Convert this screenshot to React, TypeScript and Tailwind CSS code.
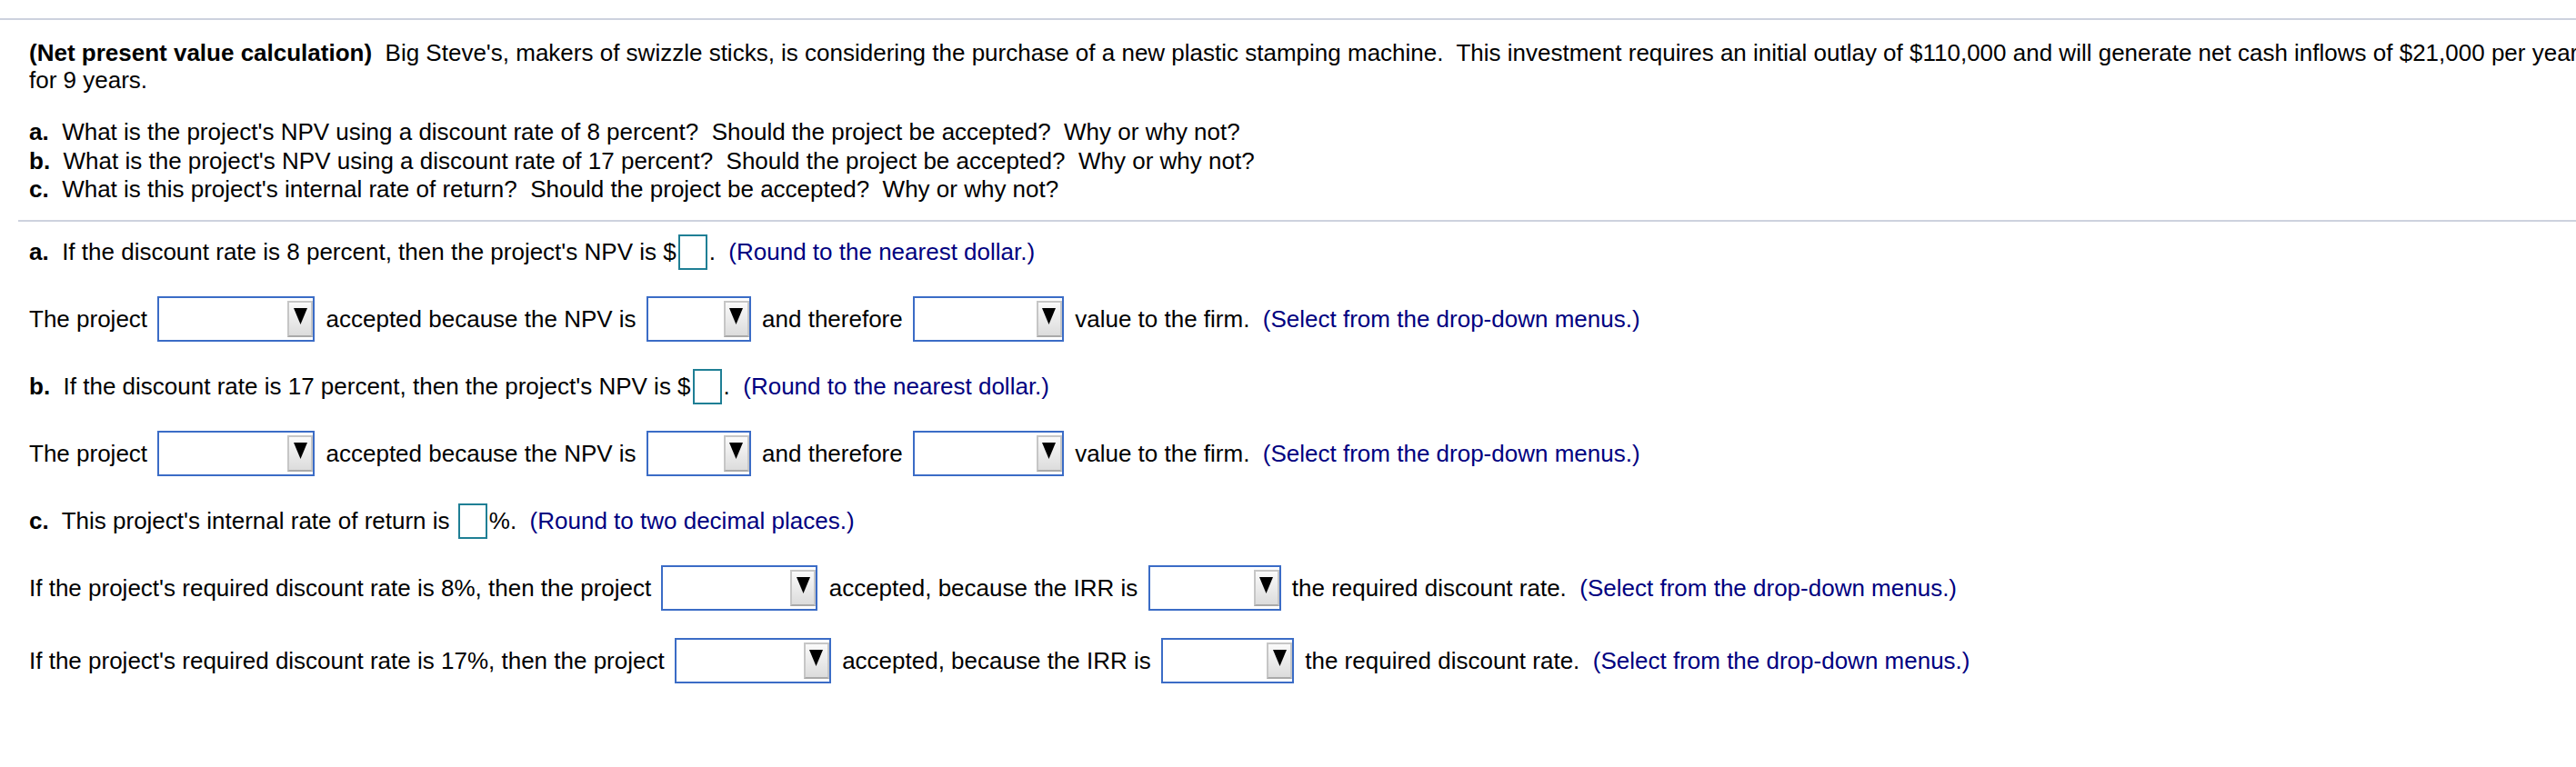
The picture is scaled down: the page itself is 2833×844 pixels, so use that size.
import React from 'react'

const navy = 'text-[#000080]'

function Dropdown({ w }: { w: string }) {
  return (
    <span className={`ml-[4px] mr-[5px] flex h-[50px] shrink-0 items-center justify-end border-2 border-[#3b6cc6] bg-white ${w}`}>
      <span className="flex h-[40px] w-[28px] justify-center border-2 border-[#c6c6c6] border-b-[#a9a9a9] bg-gradient-to-b from-[#fafafa] to-[#dcdcdc] pt-[6px]">
        <svg width="15" height="18" viewBox="0 0 15 18">
          <polygon points="0,0 15,0 7.5,18" fill="#000" />
        </svg>
      </span>
    </span>
  )
}

function Blank() {
  return <span className="mx-[2px] h-[39px] w-[32px] shrink-0 border-2 border-[#1f7f95] bg-white" />
}

function T({ children, className = '' }: { children: React.ReactNode; className?: string }) {
  return <span className={`whitespace-pre ${className}`}>{children}</span>
}

function ProjectRow() {
  return (
    <div className="flex h-[50px] items-center">
      <T>The project </T>
      <Dropdown w="w-[173px]" />
      <T> accepted because the NPV is </T>
      <Dropdown w="w-[115px]" />
      <T> and therefore </T>
      <Dropdown w="w-[166px]" />
      <T> value to the firm.  </T>
      <T className={navy}>(Select from the drop-down menus.)</T>
    </div>
  )
}

function IrrRow({ rate, w2 }: { rate: string; w2: string }) {
  return (
    <div className="flex h-[50px] items-center">
      <T>If the project's required discount rate is {rate}, then the project </T>
      <Dropdown w="w-[172px]" />
      <T> accepted, because the IRR is </T>
      <Dropdown w={w2} />
      <T> the required discount rate.  </T>
      <T className={navy}>(Select from the drop-down menus.)</T>
    </div>
  )
}

export default function App() {
  return (
    <div className="h-[844px] w-full overflow-hidden bg-white pt-[20px] text-[26px] leading-[30px] text-black" style={{ fontFamily: '"Liberation Sans", Arial, sans-serif' }}>
      <div className="h-[2px] bg-[#cdd2de]" />

      {/* question text */}
      <div className="pl-[32px] pt-[21px]">
        <p className="whitespace-pre">
          <b>(Net present value calculation)</b>
          {"  Big Steve's, makers of swizzle sticks, is considering the purchase of a new plastic stamping machine.  This investment requires an initial outlay of $110,000 and will generate net cash inflows of $21,000 per year"}
          <br />
          for 9 years.
        </p>
        <div className="mt-[27px] leading-[31.5px]">
          <div className="whitespace-pre"><b>a.</b>{"  What is the project's NPV using a discount rate of 8 percent?  Should the project be accepted?  Why or why not?"}</div>
          <div className="whitespace-pre"><b>b.</b>{"  What is the project's NPV using a discount rate of 17 percent?  Should the project be accepted?  Why or why not?"}</div>
          <div className="whitespace-pre"><b>c.</b>{"  What is this project's internal rate of return?  Should the project be accepted?  Why or why not?"}</div>
        </div>
      </div>

      <div className="ml-[20px] mt-[17px] h-[2px] bg-[#cdd2de]" />

      {/* answers */}
      <div className="mt-[14px] flex flex-col gap-[29.5px] pl-[32px]">
        <div className="flex h-[39px] items-center">
          <T><b>a.</b>{"  If the discount rate is 8 percent, then the project's NPV is $"}</T>
          <Blank />
          <T>.  </T>
          <T className={navy}>(Round to the nearest dollar.)</T>
        </div>
        <ProjectRow />
        <div className="flex h-[39px] items-center">
          <T><b>b.</b>{"  If the discount rate is 17 percent, then the project's NPV is $"}</T>
          <Blank />
          <T>.  </T>
          <T className={navy}>(Round to the nearest dollar.)</T>
        </div>
        <ProjectRow />
        <div className="flex h-[39px] items-center">
          <T><b>c.</b>{"  This project's internal rate of return is "}</T>
          <Blank />
          <T>%.  </T>
          <T className={navy}>(Round to two decimal places.)</T>
        </div>
        <IrrRow rate="8%" w2="w-[146px]" />
        <IrrRow rate="17%" w2="w-[146px]" />
      </div>
    </div>
  )
}
